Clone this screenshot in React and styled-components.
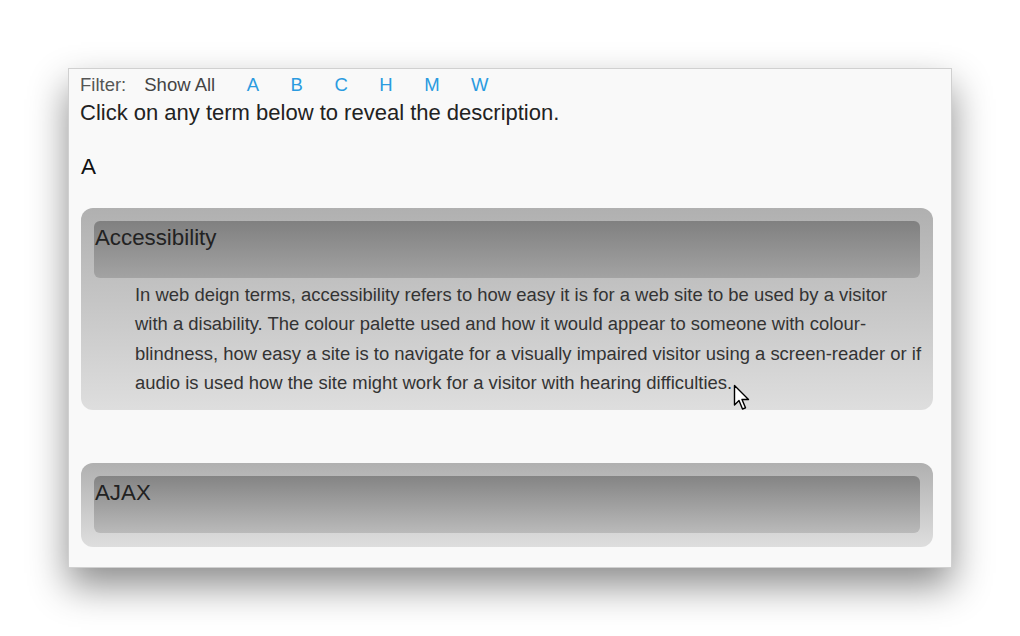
import React from 'react';
import styled, { createGlobalStyle } from 'styled-components';

const Global = createGlobalStyle`
  html, body {
    margin: 0;
    padding: 0;
    background: #ffffff;
    font-family: "Liberation Sans", Arial, sans-serif;
  }
`;

const Page = styled.div`
  width: 1020px;
  height: 636px;
  padding: 68px 0 0 68px;
  box-sizing: border-box;
  position: relative;
  overflow: hidden;
`;

const Window = styled.div`
  width: 884px;
  height: 500px;
  box-sizing: border-box;
  background: #f9f9f9;
  border: 1px solid #d0d0d0;
  box-shadow: 0 18px 36px rgba(0, 0, 0, 0.45);
  padding: 4px 18px 0 11px;
  display: flex;
  flex-direction: column;
`;

const FilterBar = styled.div`
  display: flex;
  align-items: center;
  height: 24px;
  font-size: 18.5px;
`;

const FilterLabel = styled.span`
  color: #555;
  margin-right: 18px;
`;

const FilterLink = styled.span`
  color: ${p => (p.$all ? '#444' : '#2b9be0')};
  margin-right: 31.5px;
  cursor: pointer;
`;

const Intro = styled.p`
  margin: 3px 0 0;
  font-size: 22px;
  line-height: 26px;
  color: #222;
`;

const Letter = styled.h2`
  margin: 28px 0 0 1px;
  font-size: 22.5px;
  font-weight: normal;
  line-height: 26px;
  color: #111;
`;

const Card = styled.div`
  margin: ${p => p.$top}px 0 0 1px;
  border-radius: 12px;
  background: linear-gradient(#b0b0b0, #dedede);
  padding: 13px 13px ${p => p.$bottom}px 13px;
`;

const Header = styled.div`
  height: 57px;
  box-sizing: border-box;
  border-radius: 6px;
  background: ${p =>
    p.$open
      ? 'linear-gradient(#808080, #a3a3a3)'
      : 'linear-gradient(#848484, #bababa)'};
  padding: 4px 0 0 1px;
  font-size: 22.3px;
  line-height: 26px;
  color: #222;
  cursor: pointer;
`;

const Description = styled.p`
  margin: 0 -1.5px 0 0;
  padding: 2px 0 0 41px;
  font-size: 18.45px;
  line-height: 29.4px;
  color: #333;
`;

const Pointer = styled.svg`
  position: absolute;
  left: 733px;
  top: 384px;
`;

const letters = ['A', 'B', 'C', 'H', 'M', 'W'];

export default function App() {
  return (
    <Page>
      <Global />
      <Window>
        <FilterBar>
          <FilterLabel>Filter:</FilterLabel>
          <FilterLink $all>Show All</FilterLink>
          {letters.map(l => (
            <FilterLink key={l}>{l}</FilterLink>
          ))}
        </FilterBar>
        <Intro>Click on any term below to reveal the description.</Intro>
        <Letter>A</Letter>
        <Card $top={28} $bottom={12}>
          <Header $open>Accessibility</Header>
          <Description>
            In web deign terms, accessibility refers to how easy it is for a web site to be used by a
            visitor with a disability. The colour palette used and how it would appear to someone with
            colour-blindness, how easy a site is to navigate for a visually impaired visitor using a
            screen-reader or if audio is used how the site might work for a visitor with hearing
            difficulties.
          </Description>
        </Card>
        <Card $top={53} $bottom={14}>
          <Header>AJAX</Header>
        </Card>
      </Window>
      <Pointer width="18" height="28" viewBox="0 0 18 28">
        <path
          d="M1.5 1.5 L1.5 21 L6 16.5 L9.5 25 L12.5 23.8 L9 15.5 L15.5 15.5 Z"
          fill="#fff"
          stroke="#000"
          strokeWidth="1.4"
          strokeLinejoin="round"
        />
      </Pointer>
    </Page>
  );
}
